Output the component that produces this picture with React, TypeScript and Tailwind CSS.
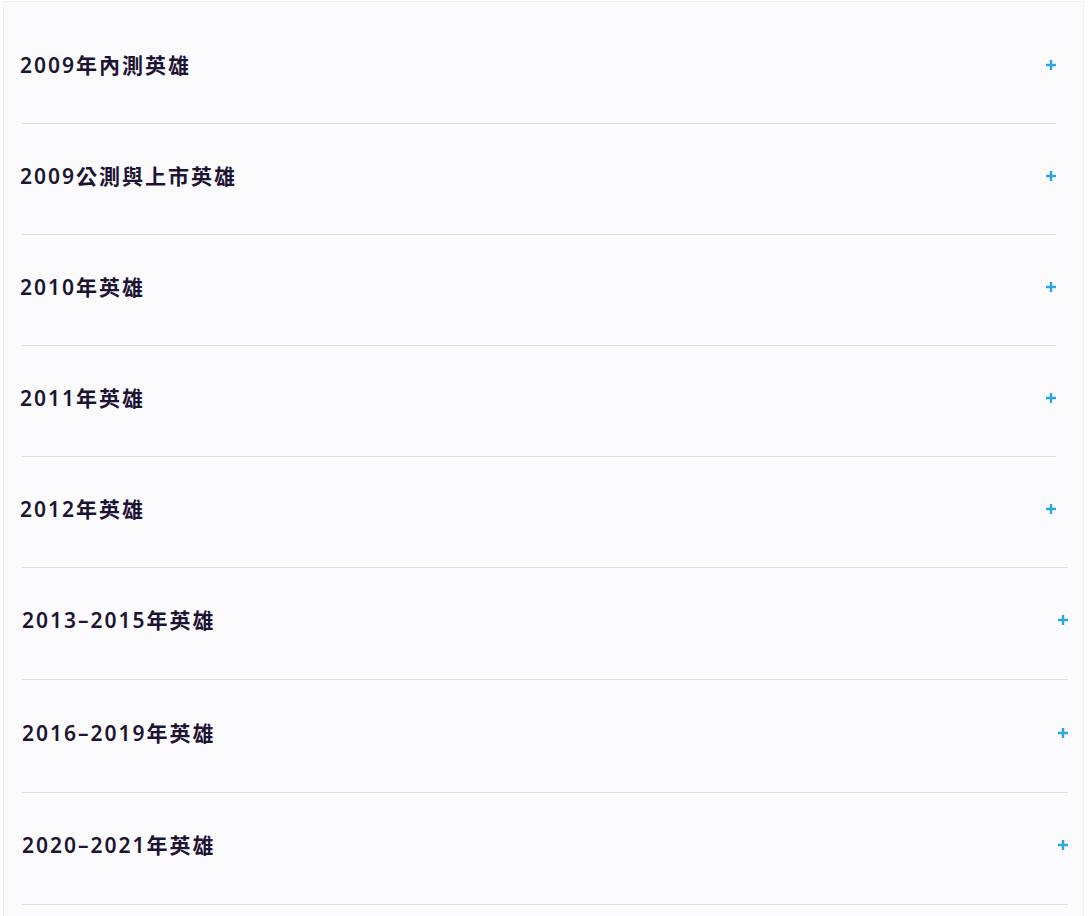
const rows = [
  { label: "2009年內測英雄", pad: "pl-[16px] pr-[27px] pt-[42px] pb-[48px]", line: "w-[1034px]" },
  { label: "2009公測與上市英雄", pad: "pl-[16px] pr-[27px] pt-[42px] pb-[48px]", line: "w-[1034px]" },
  { label: "2010年英雄", pad: "pl-[16px] pr-[27px] pt-[42px] pb-[48px]", line: "w-[1034px]" },
  { label: "2011年英雄", pad: "pl-[16px] pr-[27px] pt-[42px] pb-[48px]", line: "w-[1034px]" },
  { label: "2012年英雄", pad: "pl-[16px] pr-[27px] pt-[42px] pb-[48px]", line: "w-[1046px]" },
  { label: "2013–2015年英雄", pad: "pl-[18px] pr-[15px] pt-[42px] pb-[49px]", line: "w-[1046px]" },
  { label: "2016–2019年英雄", pad: "pl-[18px] pr-[15px] pt-[43px] pb-[49px]", line: "w-[1046px]" },
  { label: "2020–2021年英雄", pad: "pl-[18px] pr-[15px] pt-[42px] pb-[49px]", line: "w-[1046px]" },
];

function Plus() {
  return (
    <svg width="10" height="10" viewBox="0 0 10 10" className="shrink-0">
      <path d="M5 0.5v9M0.5 5h9" stroke="#2aa6df" strokeWidth="2.4" strokeLinecap="round" />
    </svg>
  );
}

export default function App() {
  return (
    <div className="h-[916px] w-[1090px] overflow-hidden bg-white pt-px">
      <div className="ml-[3px] h-[920px] w-[1081px] border-x border-t border-[#eef0f5] bg-[#fbfbfe] pt-[11px]">
        {rows.map((r) => (
          <div key={r.label}>
            <button className={`flex w-full items-center justify-between text-left ${r.pad}`}>
              <span className="font-['Noto_Sans','Noto_Sans_CJK_TC',sans-serif] text-[21px] font-semibold leading-[20px] tracking-[2px] text-[#1d1434]">
                {r.label}
              </span>
              <Plus />
            </button>
            <div className={`ml-[18px] h-px bg-[#d9e0e8] ${r.line}`} />
          </div>
        ))}
      </div>
    </div>
  );
}
